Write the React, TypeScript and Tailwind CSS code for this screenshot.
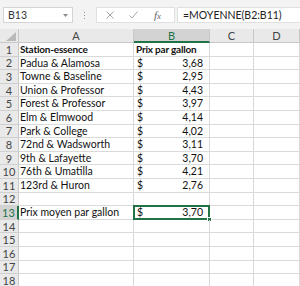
import React from "react";

type Row = { a?: string; b?: string; bold?: boolean; selected?: boolean };

const rows: Row[] = [
  { a: "Station-essence", b: "Prix par gallon", bold: true },
  { a: "Padua & Alamosa", b: "3,68" },
  { a: "Towne & Baseline", b: "2,95" },
  { a: "Union & Professor", b: "4,43" },
  { a: "Forest & Professor", b: "3,97" },
  { a: "Elm & Elmwood", b: "4,14" },
  { a: "Park & College", b: "4,02" },
  { a: "72nd & Wadsworth", b: "3,11" },
  { a: "9th & Lafayette", b: "3,70" },
  { a: "76th & Umatilla", b: "4,21" },
  { a: "123rd & Huron", b: "2,76" },
  {},
  { a: "Prix moyen par gallon", b: "3,70", selected: true },
  {},
  {},
  {},
  {},
  {},
];

const COLS = "grid grid-cols-[19px_115px_76px_44px_46px]";

function Toolbar() {
  return (
    <div className="h-[29px] bg-[#f3f3f3] flex items-start pt-[7px] pl-[3px]">
      <div className="w-[70px] h-[16px] bg-white border border-[#d4d4d4] flex items-center justify-between pl-[4px] pr-[4px]">
        <span className="text-[10.5px] text-[#333] leading-none">B13</span>
        <svg width="5" height="3" viewBox="0 0 5 3">
          <path d="M0 0 L5 0 L2.5 3 Z" fill="#8a8a8a" />
        </svg>
      </div>
      <div className="w-[23px] h-[16px] flex flex-col items-center justify-center gap-[2px]">
        <div className="w-[1px] h-[1px] bg-[#9a9a9a]" />
        <div className="w-[1px] h-[1px] bg-[#9a9a9a]" />
        <div className="w-[1px] h-[1px] bg-[#9a9a9a]" />
      </div>
      <div className="w-[79px] h-[16px] bg-white border border-[#e0e0e0] flex items-center">
        <svg className="ml-[9px]" width="8" height="8" viewBox="0 0 8 8">
          <path d="M0.5 0.5 L7.5 7.5 M7.5 0.5 L0.5 7.5" stroke="#a6a6a6" strokeWidth="1" fill="none" />
        </svg>
        <svg className="ml-[15px]" width="9" height="8" viewBox="0 0 9 8">
          <path d="M0.5 4.5 L3 7 L8.5 0.5" stroke="#a6a6a6" strokeWidth="1" fill="none" />
        </svg>
        <span className="ml-[16px] text-[11px] italic text-[#666] leading-none [font-family:'Liberation_Serif',serif]">
          f<span className="text-[9px]">x</span>
        </span>
      </div>
      <div className="flex-1 ml-[2px] h-[16px] bg-white border-y border-l border-[#e0e0e0] flex items-center pl-[5px]">
        <span className="text-[10.5px] text-[#222] leading-none">=MOYENNE(B2:B11)</span>
      </div>
    </div>
  );
}

function HeaderRow() {
  return (
    <div className={`${COLS} h-[14px]`}>
      <div className="bg-[#e9e9e9] border-r border-b border-[#c8c8c8] flex items-end justify-end pr-[2px] pb-[1px]">
        <svg width="10" height="9" viewBox="0 0 10 9">
          <path d="M10 0 L10 9 L0 9 Z" fill="#b9b9b9" />
        </svg>
      </div>
      <div className="bg-[#e9e9e9] border-r border-b border-[#c8c8c8] flex items-center justify-center text-[11px] text-[#444] leading-none">
        A
      </div>
      <div className="bg-[#d3d3d3] border-r border-[#c8c8c8] border-b-2 border-b-[#217346] flex items-center justify-center text-[11px] text-[#217346] leading-none">
        B
      </div>
      <div className="bg-[#e9e9e9] border-r border-b border-[#c8c8c8] flex items-center justify-center text-[11px] text-[#444] leading-none">
        C
      </div>
      <div className="bg-[#e9e9e9] border-r border-b border-[#c8c8c8] flex items-center justify-center text-[11px] text-[#444] leading-none">
        D
      </div>
    </div>
  );
}

function DataRow({ row, idx }: { row: Row; idx: number }) {
  const sel = !!row.selected;
  return (
    <div className={`${COLS} h-[13.6px]`}>
      <div
        className={
          sel
            ? "bg-[#d3d3d3] border-b border-[#d0d0d0] border-r-2 border-r-[#217346] flex items-center justify-center text-[11px] text-[#217346] leading-none"
            : "bg-[#e9e9e9] border-b border-[#d0d0d0] border-r border-r-[#c8c8c8] flex items-center justify-center text-[11px] text-[#444] leading-none"
        }
      >
        {idx + 1}
      </div>
      <div
        className={`border-r border-b border-[#dadada] flex items-center pl-[1px] text-[#111] leading-none whitespace-nowrap ${
          row.bold ? "font-bold text-[10px] tracking-[-0.2px]" : "text-[10.5px]"
        }`}
      >
        {row.a}
      </div>
      <div className="relative border-r border-b border-[#dadada] flex items-center text-[10.5px] text-[#111] leading-none whitespace-nowrap">
        {row.bold ? (
          <span className="pl-[2px] font-bold text-[10px] tracking-[-0.2px]">{row.b}</span>
        ) : row.b ? (
          <div className="flex-1 flex justify-between pl-[3px] pr-[6px]">
            <span>$</span>
            <span>{row.b}</span>
          </div>
        ) : null}
        {sel && (
          <>
            <div className="absolute left-[-1px] top-[-1px] right-[-1px] bottom-[-1px] border-2 border-[#217346]" />
            <div className="absolute right-[-3px] bottom-[-3px] w-[5px] h-[5px] bg-[#217346] border border-white" />
          </>
        )}
      </div>
      <div className="border-r border-b border-[#dadada]" />
      <div className="border-r border-b border-[#dadada]" />
    </div>
  );
}

export default function App() {
  return (
    <div className="w-[300px] h-[286px] overflow-hidden bg-white [font-family:Lato,'Liberation_Sans',sans-serif]">
      <Toolbar />
      <HeaderRow />
      {rows.map((r, i) => (
        <DataRow key={i} row={r} idx={i} />
      ))}
    </div>
  );
}
